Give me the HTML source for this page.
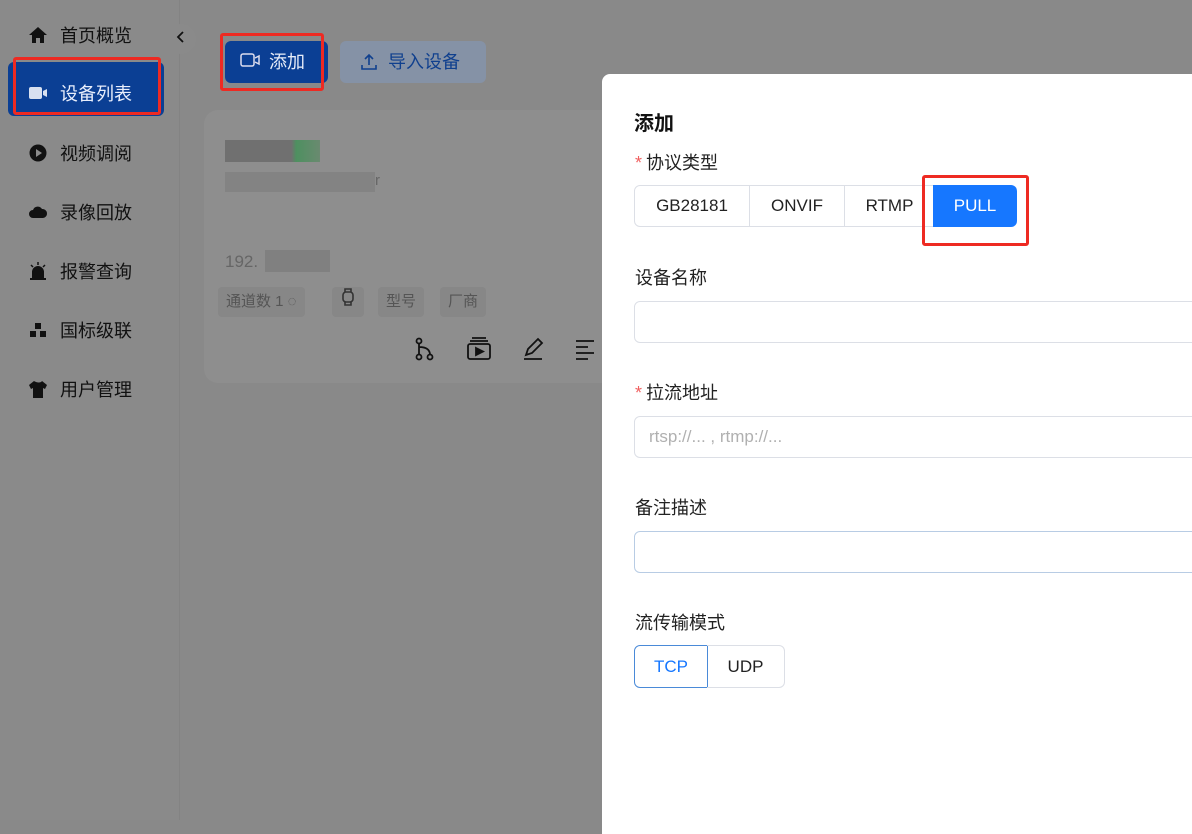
<!DOCTYPE html>
<html><head><meta charset="utf-8"><style>
*{box-sizing:border-box;margin:0;padding:0}
body{width:1192px;height:820px;overflow:hidden;background:#898989;font-family:"Liberation Sans","Noto Sans CJK SC",sans-serif;position:relative}
.side{position:absolute;left:0;top:0;width:180px;height:820px;background:#8a8a8a;border-right:1px solid #838383}
.nav{position:absolute;left:28px;font-size:18px;color:#111;display:flex;align-items:center;gap:12px}
.abs{position:absolute}
.red{position:absolute;border:3px solid #ee2a22;border-radius:3px}
.card{position:absolute;left:204px;top:110px;width:430px;height:273px;background:#8e8e8e;border-radius:14px}
.blur{position:absolute;background:#7a7a7a}
.tag{position:absolute;top:287px;height:30px;background:#878787;border-radius:4px;font-size:15px;color:#555;line-height:30px;padding:0 8px}
.drawer{position:absolute;left:602px;top:74px;width:600px;height:760px;background:#fff;border-radius:8px 0 0 0}
.lbl{position:absolute;left:33px;font-size:18px;color:#222}
.lbl b{color:#f06060;font-weight:normal;margin-right:4px}
.inp{position:absolute;left:32px;width:600px;height:42px;border:1px solid #dcdfe6;border-radius:6px}
.seg{position:absolute;top:111px;height:42px;border:1px solid #dcdfe6;font-size:17px;color:#222;text-align:center;line-height:40px}
</style></head><body>
<div class="side"></div>
<div class="nav" style="top:22px"><svg width="20" height="18" viewBox="0 0 20 18"><path d="M10 1L1 9h3v8h4v-5h4v5h4V9h3z" fill="#111"/></svg>首页概览</div>
<div class="abs" style="left:8px;top:62px;width:156px;height:54px;background:#0b3f94;border-radius:6px"></div>
<div class="red" style="left:13px;top:57px;width:148px;height:58px"></div>
<div class="nav" style="top:80px;color:#e8eefc"><svg width="20" height="16" viewBox="0 0 20 16"><rect x="1" y="2" width="13" height="12" rx="2" fill="#d8e0f0"/><path d="M15 6l4-2v8l-4-2z" fill="#d8e0f0"/></svg>设备列表</div>
<div class="nav" style="top:140px"><svg width="20" height="20" viewBox="0 0 20 20"><circle cx="10" cy="10" r="8.5" fill="#111"/><path d="M8 6l6 4-6 4z" fill="#8a8a8a"/></svg>视频调阅</div>
<div class="nav" style="top:199px"><svg width="20" height="14" viewBox="0 0 20 14"><path d="M5 13a4 4 0 010-8 5 5 0 019-1 4.5 4.5 0 011 9z" fill="#111"/></svg>录像回放</div>
<div class="nav" style="top:258px"><svg width="20" height="20" viewBox="0 0 20 20"><path d="M4 17V11a6 6 0 0112 0v6zM2 17h16v2H2z" fill="#111"/><path d="M10 1v3M3 4l2 2M17 4l-2 2" stroke="#111" stroke-width="1.5"/></svg>报警查询</div>
<div class="nav" style="top:317px"><svg width="20" height="16" viewBox="0 0 20 16"><rect x="7" y="1" width="6" height="6" fill="#111"/><rect x="2" y="9" width="6" height="6" fill="#111"/><rect x="12" y="9" width="6" height="6" fill="#111"/></svg>国标级联</div>
<div class="nav" style="top:376px"><svg width="20" height="20" viewBox="0 0 20 20"><path d="M6 2l-5 4 2 4 2-1v10h10V9l2 1 2-4-5-4c-1 2-5 2-8 0z" fill="#111"/></svg>用户管理</div>
<div class="abs" style="left:166px;top:24px;width:30px;height:30px;border-radius:50%;background:#8a8a8a;text-align:center;line-height:30px"><svg width="10" height="12" viewBox="0 0 10 12"><path d="M7 1L2 6l5 5" fill="none" stroke="#111" stroke-width="1.8"/></svg></div>

<div class="abs" style="left:225px;top:41px;width:103px;height:42px;background:#0b3f94;border-radius:6px;color:#e6ecf8;font-size:18px;line-height:42px;padding-left:44px">添加</div>
<svg class="abs" style="left:240px;top:53px" width="20" height="18" viewBox="0 0 20 18"><rect x="1" y="1" width="13" height="12" rx="2" fill="none" stroke="#dde" stroke-width="1.5"/><path d="M15 5l4-2v8l-4-2" fill="none" stroke="#dde" stroke-width="1.5"/></svg>
<div class="red" style="left:220px;top:33px;width:104px;height:58px"></div>
<div class="abs" style="left:340px;top:41px;width:146px;height:42px;background:#8592a6;border-radius:6px;color:#10408e;font-size:18px;line-height:42px;padding-left:48px">导入设备</div>
<svg class="abs" style="left:360px;top:53px" width="18" height="18" viewBox="0 0 18 18"><path d="M9 12V2M5 6l4-4 4 4M2 12v4h14v-4" fill="none" stroke="#10408e" stroke-width="1.6"/></svg>

<div class="card"></div>
<div class="blur" style="left:225px;top:140px;width:95px;height:22px;background:linear-gradient(90deg,#707070 70%,#4e9060 75%,#6a8a70)"></div>
<div class="blur" style="left:225px;top:172px;width:150px;height:20px;background:#838383"></div>
<div class="abs" style="left:375px;top:172px;font-size:15px;color:#666">r</div>
<div class="abs" style="left:225px;top:252px;font-size:17px;color:#666">192.</div>
<div class="blur" style="left:265px;top:250px;width:65px;height:22px;background:#808080"></div>
<div class="tag" style="left:218px">通道数 1 ◌</div>
<div class="tag" style="left:332px;width:32px"><svg width="16" height="18" viewBox="0 0 16 18"><rect x="3" y="4" width="10" height="10" rx="3" fill="none" stroke="#333" stroke-width="1.6"/><path d="M5 4V1h6v3M5 14v3h6v-3" stroke="#333" stroke-width="1.6" fill="none"/></svg></div>
<div class="tag" style="left:378px">型号</div>
<div class="tag" style="left:440px">厂商</div>
<svg class="abs" style="left:414px;top:337px" width="190" height="24" viewBox="0 0 190 24">
<g fill="none" stroke="#111" stroke-width="1.8">
<circle cx="5" cy="4" r="2.5"/><circle cx="5" cy="20" r="2.5"/><circle cx="16" cy="20" r="2.5"/><path d="M5 6.5v11M5 10c6 0 11 2 11 8"/>
<rect x="54" y="7" width="22" height="15" rx="2"/><path d="M56 4h18M58 1h14"/><path d="M62 11l7 3.5-7 3.5z" fill="#111"/>
<path d="M112 18l2-6 10-10 4 4-10 10zM110 22h18"/>
<path d="M162 4h18M162 10h12M162 16h18M162 22h12"/>
</g></svg>

<div class="drawer">
<div class="abs" style="left:32px;top:33px;font-size:20px;font-weight:bold;color:#111">添加</div>
<div class="lbl" style="top:75px"><b>*</b>协议类型</div>
<div class="seg" style="left:32px;width:116px;border-radius:6px 0 0 6px">GB28181</div>
<div class="seg" style="left:147px;width:96px">ONVIF</div>
<div class="seg" style="left:242px;width:90px;border-right:none">RTMP</div>
<div class="abs" style="left:331px;top:111px;width:84px;height:42px;background:#1677ff;border-radius:0 6px 6px 0;color:#fff;font-size:17px;text-align:center;line-height:42px">PULL</div>
<div class="red" style="left:320px;top:101px;width:107px;height:71px"></div>
<div class="lbl" style="top:190px">设备名称</div>
<div class="inp" style="top:227px"></div>
<div class="lbl" style="top:305px"><b>*</b>拉流地址</div>
<div class="inp" style="top:342px;color:#b0b0b0;font-size:17px;line-height:40px;padding-left:14px">rtsp://... , rtmp://...</div>
<div class="lbl" style="top:420px">备注描述</div>
<div class="inp" style="top:457px;border-color:#b8cce4"></div>
<div class="lbl" style="top:535px">流传输模式</div>
<div class="abs" style="left:32px;top:571px;width:74px;height:43px;border:1px solid #4a8ad8;border-radius:6px 0 0 6px;color:#1677ff;font-size:17px;text-align:center;line-height:41px">TCP</div>
<div class="abs" style="left:105px;top:571px;width:78px;height:43px;border:1px solid #dcdfe6;border-left:none;border-radius:0 6px 6px 0;color:#222;font-size:17px;text-align:center;line-height:41px">UDP</div>
</div>
</body></html>
